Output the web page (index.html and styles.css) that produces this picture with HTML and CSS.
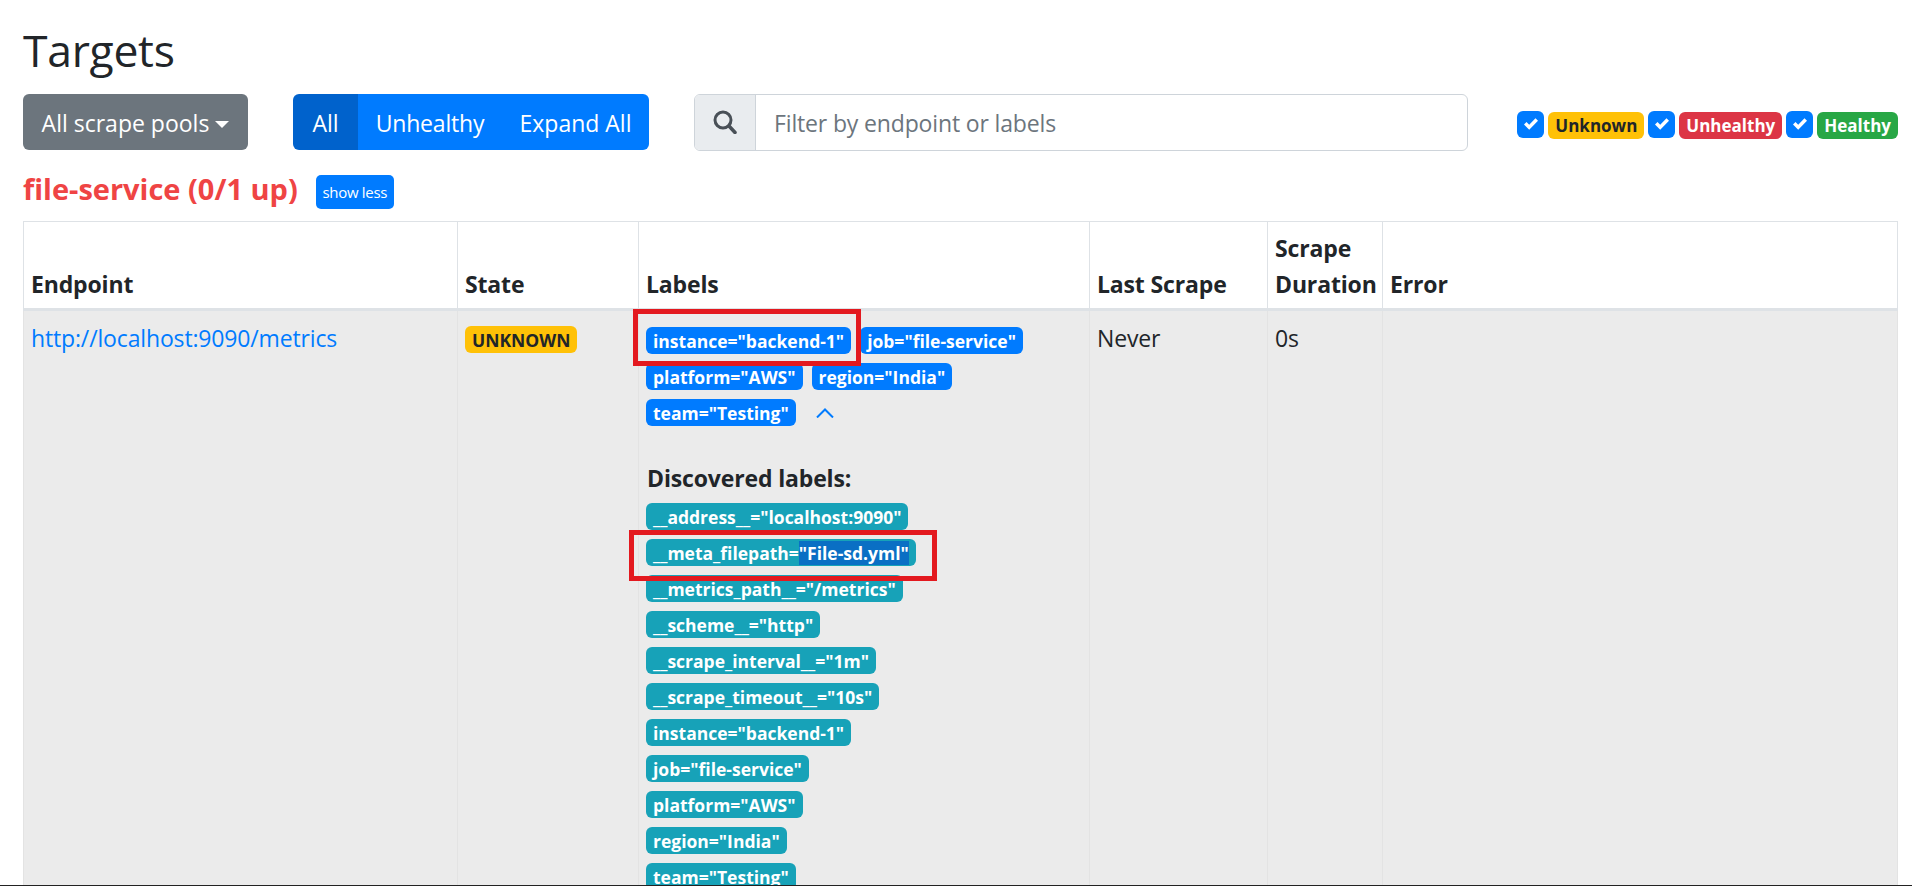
FILE: index.html
```html
<!DOCTYPE html>
<html lang="en">
<head>
<meta charset="utf-8">
<title>Targets</title>
<link rel="stylesheet" href="styles.css">
</head>
<body>
<main class="page">
  <h1 class="title">Targets</h1>
  <div class="toolbar">
    <button class="btn btn-grey">All scrape pools<span class="caret"></span></button>
    <div class="btn-group">
      <button class="btn btn-blue active">All</button>
      <button class="btn btn-blue">Unhealthy</button>
      <button class="btn btn-blue">Expand All</button>
    </div>
    <div class="search">
      <span class="search-addon">
        <svg viewBox="0 0 24 24" width="24" height="24"><circle cx="10" cy="10" r="8" fill="none" stroke="#495057" stroke-width="3"/><path stroke="#495057" stroke-width="3.500" stroke-linecap="round" d="M16 16l6 6.500"/></svg>
      </span>
      <span class="search-input">Filter by endpoint or labels</span>
    </div>
    <div class="legend">
      <span class="check"><svg viewBox="0 0 8 8" width="14" height="14"><path fill="#fff" d="M6.564.750l-3.590 3.612-1.538-1.550L0 4.260 2.974 7.250 8 2.193z"/></svg></span>
      <span class="badge b-yellow">Unknown</span>
      <span class="check"><svg viewBox="0 0 8 8" width="14" height="14"><path fill="#fff" d="M6.564.750l-3.590 3.612-1.538-1.550L0 4.260 2.974 7.250 8 2.193z"/></svg></span>
      <span class="badge b-red">Unhealthy</span>
      <span class="check"><svg viewBox="0 0 8 8" width="14" height="14"><path fill="#fff" d="M6.564.750l-3.590 3.612-1.538-1.550L0 4.260 2.974 7.250 8 2.193z"/></svg></span>
      <span class="badge b-green">Healthy</span>
    </div>
  </div>
  <div class="pool-head">
    <h2 class="pool-name">file-service (0/1 up)</h2>
    <button class="btn-small">show less</button>
  </div>
  <table class="targets">
    <thead>
      <tr>
        <th class="c-endpoint">Endpoint</th>
        <th class="c-state">State</th>
        <th class="c-labels">Labels</th>
        <th class="c-last">Last Scrape</th>
        <th class="c-dur">Scrape Duration</th>
        <th>Error</th>
      </tr>
    </thead>
    <tbody>
      <tr>
        <td><a class="link" href="#">http://localhost:9090/metrics</a></td>
        <td><span class="badge b-yellow upper">UNKNOWN</span></td>
        <td>
          <div class="labels first">
            <span class="badge b-blue mark-wrap">instance="backend-1"<span class="mark mark-a"></span></span>
            <span class="badge b-blue">job="file-service"</span>
            <span class="badge b-blue">platform="AWS"</span>
            <span class="badge b-blue">region="India"</span>
            <span class="badge b-blue">team="Testing"</span>
            <svg class="chevron" viewBox="0 0 18 10" width="18" height="10"><path fill="none" stroke="#007bff" stroke-width="2" d="M1 9.500 9 1.500 17 9.500"/></svg>
          </div>
          <div class="discovered">Discovered labels:</div>
          <div class="labels stack">
            <span class="badge b-teal">__address__="localhost:9090"</span>
            <span class="badge b-teal mark-wrap">__meta_filepath=<span class="sel">"File-sd.yml"</span><span class="mark mark-b"></span></span>
            <span class="badge b-teal">__metrics_path__="/metrics"</span>
            <span class="badge b-teal">__scheme__="http"</span>
            <span class="badge b-teal">__scrape_interval__="1m"</span>
            <span class="badge b-teal">__scrape_timeout__="10s"</span>
            <span class="badge b-teal">instance="backend-1"</span>
            <span class="badge b-teal">job="file-service"</span>
            <span class="badge b-teal">platform="AWS"</span>
            <span class="badge b-teal">region="India"</span>
            <span class="badge b-teal">team="Testing"</span>
          </div>
        </td>
        <td>Never</td>
        <td>0s</td>
        <td></td>
      </tr>
    </tbody>
  </table>
</main>
</body>
</html>
```
FILE: styles.css
```css
* { box-sizing: border-box; }
html, body { margin: 0; height: 886px; overflow: hidden; }
body {
  position: relative;
  background: #fff;
  color: #212529;
  font-family: "Open Sans", "Noto Sans", sans-serif;
  font-size: 23px;
  letter-spacing: -0.15px;
  line-height: 36px;
}
body::after {
  content: "";
  position: absolute;
  left: 0; right: 0; bottom: 0;
  height: 1px;
  background: #222;
}
.page { padding: 25px 14px 0 23px; }
.title {
  margin: 0 0 19px;
  font-size: 44.500px;
  line-height: 50px;
  font-weight: 400;
  letter-spacing: -0.3px;
}
.toolbar { display: flex; align-items: center; height: 56px; }
.btn {
  height: 56px;
  border: 0;
  padding: 2px 18px 0;
  color: #fff;
  font: inherit;
  letter-spacing: 0;
  white-space: nowrap;
}
.btn-grey { width: 225px; background: #6c757d; border-radius: 6px; }
.caret {
  display: inline-block;
  margin-left: 6px;
  vertical-align: 4px;
  border-top: 7px solid #fff;
  border-left: 7px solid transparent;
  border-right: 7px solid transparent;
}
.btn-group { display: flex; margin-left: 45px; width: 356px; border-radius: 6px; overflow: hidden; }
.btn-blue { background: #007bff; }
.btn-blue.active { background: #0062cc; width: 65px; padding: 2px 0 0; }
.btn-group .btn:nth-child(2) { width: 144px; padding: 2px 0 0; letter-spacing: -0.2px; }
.btn-group .btn:nth-child(3) { flex: 1; padding: 2px 0 0; }
.search {
  display: flex;
  height: 57px;
  width: 774px;
  margin-left: 45px;
  border: 1px solid #ced4da;
  border-radius: 6px;
  overflow: hidden;
}
.search-addon {
  display: flex;
  align-items: center;
  justify-content: center;
  width: 61px;
  background: #e9ecef;
  border-right: 1px solid #ced4da;
}
.search-input { padding: 10px 18px; color: #6c757d; }
.legend { display: flex; align-items: center; gap: 4px; margin-left: auto; padding-top: 6px; }
.legend .badge { font-size: 17px; }
.check {
  display: flex;
  align-items: center;
  justify-content: center;
  width: 27px;
  height: 27px;
  margin-top: -2px;
  border-radius: 6px;
  background: #007bff;
}
.badge {
  display: inline-block;
  height: 27px;
  padding: 0 7px;
  border-radius: 6px;
  font-size: 17.500px;
  line-height: 28px;
  font-weight: 700;
  letter-spacing: 0;
  white-space: nowrap;
  color: #fff;
}
.b-yellow { background: #ffc107; color: #212529; }
.b-red { background: #dc3545; }
.b-green { background: #28a745; }
.b-blue { background: #007bff; }
.b-teal { background: #17a2b8; }
.pool-head { display: flex; align-items: center; gap: 18px; margin: 24px 0 12px; height: 35px; }
.pool-name { margin: -6px 0 0; font-size: 29px; line-height: 36px; font-weight: 700; letter-spacing: 0; color: #ef4444; }
.btn-small {
  height: 34px;
  width: 78px;
  padding: 0;
  border: 0;
  border-radius: 5px;
  background: #007bff;
  color: #fff;
  font: inherit;
  font-size: 15px;
  letter-spacing: -0.3px;
  line-height: 34px;
}
.targets {
  width: 100%;
  table-layout: fixed;
  border-collapse: collapse;
}
.targets th, .targets td {
  border: 1px solid #dee2e6;
  padding: 9px 7px 7px;
  vertical-align: top;
  text-align: left;
}
.targets th { padding: 8px 7px 6px; vertical-align: bottom; font-weight: 700; border-bottom: 3px solid #dee2e6; }
.targets td { background: #ebebeb; border-color: #e3e3e3; border-bottom: 0; }
.c-endpoint { width: 434px; }
.c-state { width: 181px; }
.c-labels { width: 451px; }
.c-last { width: 178px; }
.c-dur { width: 115px; }
.link { color: #007bff; text-decoration: none; }
.labels { display: flex; flex-wrap: wrap; align-items: center; gap: 9px; }
.first { margin-top: 7px; }
.stack { flex-direction: column; align-items: flex-start; }
.chevron { margin-left: 11px; }
.discovered { margin: 34px 0 7px 1px; font-weight: 700; }
.mark-wrap { position: relative; }
.mark { position: absolute; border: 5px solid #e3191f; pointer-events: none; }
.mark-a { left: -13px; top: -18px; width: 228px; height: 57px; }
.mark-b { left: -17px; top: -9px; width: 308px; height: 51px; }
.sel { display: inline-block; height: 24px; line-height: 24px; background: #0a6fc4; }
```
